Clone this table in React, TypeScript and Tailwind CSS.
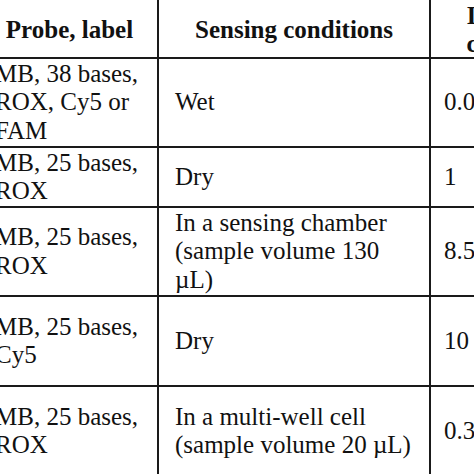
type Row = {
  probe: string[];
  condition: string[];
  value: string;
  height: string;
};

const rows: Row[] = [
  { probe: ["MB, 38 bases,", "ROX, Cy5 or", "FAM"], condition: ["Wet"], value: "0.05", height: "h-[87px]" },
  { probe: ["MB, 25 bases,", "ROX"], condition: ["Dry"], value: "1", height: "h-[58px]" },
  {
    probe: ["MB, 25 bases,", "ROX"],
    condition: ["In a sensing chamber", "(sample volume 130", "\u00b5L)"],
    value: "8.5",
    height: "h-[87px]",
  },
  { probe: ["MB, 25 bases,", "Cy5"], condition: ["Dry"], value: "10", height: "h-[88px]" },
  {
    probe: ["MB, 25 bases,", "ROX"],
    condition: ["In a multi-well cell", "(sample volume 20 \u00b5L)"],
    value: "0.3",
    height: "h-[88px]",
  },
];

function Lines({ lines }: { lines: string[] }) {
  return (
    <div>
      {lines.map((line, i) => (
        <div key={i} className="whitespace-nowrap">
          {line}
        </div>
      ))}
    </div>
  );
}

export default function App() {
  return (
    <div className="w-[474px] h-[474px] overflow-hidden bg-white">
      <div
        className="ml-[-20px] mt-[-4px] w-max bg-[#1a1a1a] p-[2px] text-[25px] leading-[28.5px] text-[#111]"
        style={{ fontFamily: '"Liberation Serif", "Times New Roman", serif' }}
      >
        <div className="grid grid-cols-[175px_270px_126px] gap-[2px]">
          <div className="h-[59px] pt-[5px] bg-white flex items-center justify-center font-bold whitespace-nowrap">
            Probe, label
          </div>
          <div className="h-[59px] pt-[5px] bg-white flex items-center justify-center font-bold whitespace-nowrap">
            Sensing conditions
          </div>
          <div className="h-[59px] pt-[5px] bg-white flex flex-col items-center justify-center font-bold whitespace-nowrap">
            <div>LOD</div>
            <div>conc.</div>
          </div>

          {rows.map((row, i) => (
            <div key={i} className="contents">
              <div className={`${row.height} bg-white flex items-center pl-[13px]`}>
                <Lines lines={row.probe} />
              </div>
              <div className={`${row.height} bg-white flex items-center pl-[16px]`}>
                <Lines lines={row.condition} />
              </div>
              <div className={`${row.height} bg-white flex items-center pl-[13px]`}>
                {row.value}
              </div>
            </div>
          ))}
        </div>
      </div>
    </div>
  );
}
